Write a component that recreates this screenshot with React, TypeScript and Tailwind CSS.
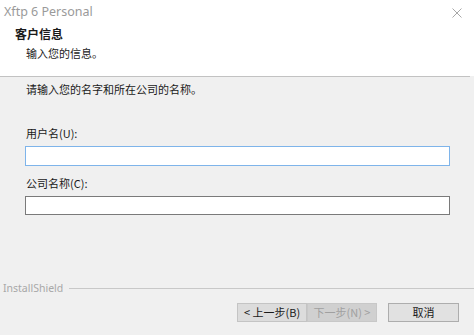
export default function App() {
  const cjk = "font-['Microsoft_YaHei','Noto_Sans_CJK_SC',sans-serif]";

  return (
    <div className={`w-[474px] h-[335px] flex flex-col bg-[#f0f0f0] text-[#1a1a1a] ${cjk}`}>
      {/* header */}
      <div className="h-[76px] shrink-0 bg-white flex flex-col">
        <div className="h-[25px] flex items-center justify-between pl-[4px] pr-[12px]">
          <span className="text-[12.5px] text-[#9a9a9a] font-['Noto_Sans',sans-serif]">Xftp 6 Personal</span>
          <svg width="10" height="10" viewBox="0 0 10 10" className="mt-[1px]">
            <path d="M0.5 0.5L9.5 9.5M9.5 0.5L0.5 9.5" stroke="#a8a8a8" strokeWidth="1" />
          </svg>
        </div>
        <div className="pl-[15px] text-[12px] font-bold leading-[16px] mt-[1px]">客户信息</div>
        <div className="pl-[26px] text-[11px] leading-[16px] mt-[3px]">输入您的信息。</div>
      </div>
      <div className="h-[1px] shrink-0 bg-[#c2c2c2] mr-[4px]" />

      {/* body */}
      <div className="flex-1 flex flex-col pl-[25px] pr-[24px]">
        <div className="text-[11px] leading-[16px] mt-[4px] pl-[1px]">请输入您的名字和所在公司的名称。</div>
        <div className="text-[11px] leading-[16px] mt-[28px] pl-[1px]">用户名(U):</div>
        <div className="h-[20px] mt-[5px] bg-white border border-[#7eb4ea]" />
        <div className="text-[11px] leading-[16px] mt-[9px] pl-[1px]">公司名称(C):</div>
        <div className="h-[19px] mt-[5px] bg-white border border-[#7a7a7a]" />
      </div>

      {/* installshield divider */}
      <div className="flex items-center pl-[3px]">
        <span className="text-[10.5px] text-[#a8a8a8] font-['Noto_Sans',sans-serif] leading-[14px]">InstallShield</span>
        <div className="flex-1 h-[1px] bg-[#c8c8c8] ml-[6px]" />
      </div>

      {/* buttons */}
      <div className="flex justify-end items-center pr-[15px] mt-[8px] mb-[13px] text-[11px]">
        <button className="w-[70px] h-[19px] bg-[#dcdcdc] border border-[#c4c4c4] flex items-center justify-center leading-none">
          &lt; 上一步(B)
        </button>
        <button className="w-[70px] h-[19px] bg-[#d0d0d0] border border-[#c8c8c8] text-[#a0a0a0] flex items-center justify-center leading-none">
          下一步(N) &gt;
        </button>
        <button className="w-[71px] h-[19px] ml-[11px] bg-[#e1e1e1] border border-[#adadad] flex items-center justify-center leading-none">
          取消
        </button>
      </div>
    </div>
  );
}
